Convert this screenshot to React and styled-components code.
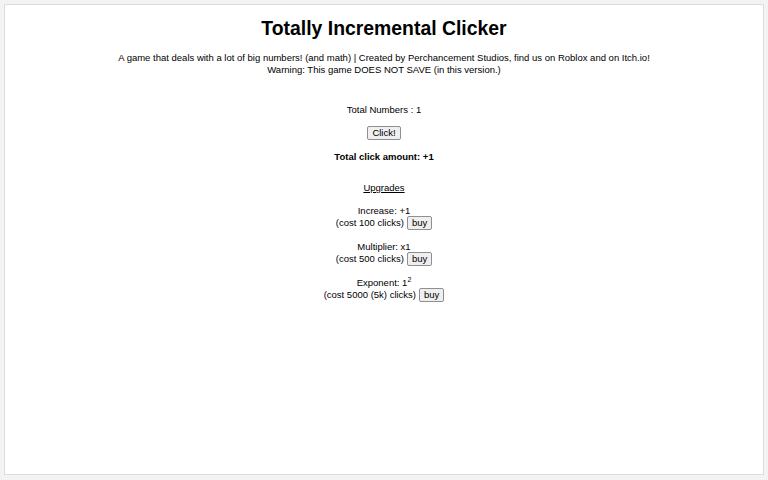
import React, { useState } from "react";
import styled, { createGlobalStyle } from "styled-components";

const Global = createGlobalStyle`
  html, body { margin: 0; padding: 0; background: #f3f3f3; }
  body { font-family: "Liberation Sans", Arial, sans-serif; color: #000; }
`;

const Page = styled.div`
  box-sizing: border-box;
  width: 768px;
  height: 480px;
  padding: 4px 4px 5px 4px;
  display: flex;
`;

const Card = styled.main`
  flex: 1;
  background: #fff;
  border: 1px solid #dcdcdc;
  text-align: center;
  padding-top: 11px;
`;

const Title = styled.h1`
  margin: 0;
  font-size: 19.4px;
  line-height: 24px;
  font-weight: bold;
`;

const Intro = styled.p`
  margin: 12px 0 0;
  font-size: 9.5px;
  line-height: 12px;
`;

const Line = styled.p`
  margin: ${(p) => p.$top || 0}px 0 0;
  font-size: 9.5px;
  line-height: 12px;
  font-weight: ${(p) => (p.$bold ? "bold" : "normal")};
`;

const Heading = styled.p`
  margin: 19px 0 0;
  font-size: 9.5px;
  line-height: 12px;
  text-decoration: underline;
`;

const Button = styled.button`
  font-family: "Liberation Sans", Arial, sans-serif;
  font-size: 9.5px;
  line-height: 10px;
  padding: 1px 4px;
  margin: 0;
  background: #efefef;
  border: 1px solid #8f8f8f;
  border-radius: 2px;
  color: #000;
  vertical-align: middle;
`;

const ClickRow = styled.div`
  margin-top: 7px;
  height: 14px;
`;

const Upgrade = styled.div`
  margin-top: ${(p) => p.$top}px;
  font-size: 9.5px;
  line-height: 12px;
`;

const CostRow = styled.div`
  display: flex;
  justify-content: center;
  align-items: center;
  gap: 3px;
  height: 12px;
`;

const Sup = styled.sup`
  font-size: 7px;
  line-height: 0;
`;

export default function App() {
  const [total, setTotal] = useState(1);
  const upgrades = [
    { label: "Increase: +1", cost: "(cost 100 clicks)" },
    { label: "Multiplier: x1", cost: "(cost 500 clicks)" },
    { label: <>Exponent: 1<Sup>2</Sup></>, cost: "(cost 5000 (5k) clicks)" },
  ];
  return (
    <Page>
      <Global />
      <Card>
        <Title>Totally Incremental Clicker</Title>
        <Intro>
          A game that deals with a lot of big numbers! (and math) | Created by Perchancement Studios, find us on Roblox and on Itch.io!
          <br />
          Warning: This game DOES NOT SAVE (in this version.)
        </Intro>
        <Line $top={28}>Total Numbers : {total}</Line>
        <ClickRow>
          <Button onClick={() => setTotal(total + 1)}>Click!</Button>
        </ClickRow>
        <Line $top={14} $bold>Total click amount: +1</Line>
        <Heading>Upgrades</Heading>
        {upgrades.map((u, i) => (
          <Upgrade key={i} $top={i === 0 ? 11 : 12}>
            <div>{u.label}</div>
            <CostRow>
              <span>{u.cost}</span>
              <Button>buy</Button>
            </CostRow>
          </Upgrade>
        ))}
      </Card>
    </Page>
  );
}
